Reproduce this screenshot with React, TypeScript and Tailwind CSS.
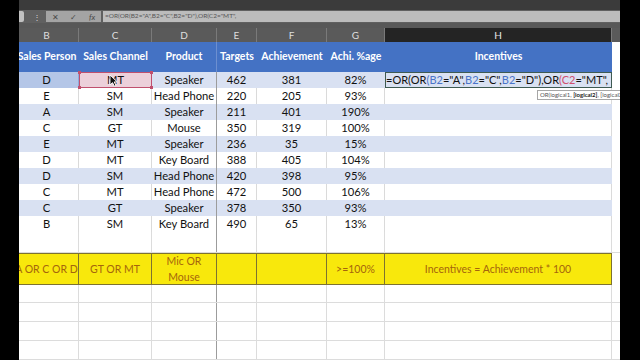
import React from "react";

type Row = { p: string; ch: string; prod: string; t: string; a: string; pct: string };

const rows: Row[] = [
  { p: "D", ch: "MT", prod: "Speaker", t: "462", a: "381", pct: "82%" },
  { p: "E", ch: "SM", prod: "Head Phone", t: "220", a: "205", pct: "93%" },
  { p: "A", ch: "SM", prod: "Speaker", t: "211", a: "401", pct: "190%" },
  { p: "C", ch: "GT", prod: "Mouse", t: "350", a: "319", pct: "100%" },
  { p: "E", ch: "MT", prod: "Speaker", t: "236", a: "35", pct: "15%" },
  { p: "D", ch: "MT", prod: "Key Board", t: "388", a: "405", pct: "104%" },
  { p: "D", ch: "SM", prod: "Head Phone", t: "420", a: "398", pct: "95%" },
  { p: "C", ch: "MT", prod: "Head Phone", t: "472", a: "500", pct: "106%" },
  { p: "C", ch: "GT", prod: "Speaker", t: "378", a: "350", pct: "93%" },
  { p: "B", ch: "SM", prod: "Key Board", t: "490", a: "65", pct: "13%" },
];

const W = ["w-[64px]", "w-[73px]", "w-[65px]", "w-[40px]", "w-[70px]", "w-[58px]", "w-[227px]"];
const letters = ["B", "C", "D", "E", "F", "G", "H"];

function Cursor() {
  return (
    <svg className="absolute left-[29px] top-[1px]" width="9" height="13" viewBox="0 0 9 13">
      <path d="M1 1 L1 11 L3.5 8.6 L5.4 12.2 L7 11.4 L5.2 7.9 L8.2 7.9 Z" fill="#111" stroke="#fff" strokeWidth="0.9" />
    </svg>
  );
}

function DataRow({ r, i }: { r: Row; i: number }) {
  const blue = i % 2 === 0;
  const first = i === 0;
  const bg = blue ? "bg-[#d9e1f2]" : "bg-white";
  const grid = blue ? "border-transparent" : "border-[#dadada]";
  const vals = [r.p, r.ch, r.prod, r.t, r.a, r.pct];
  return (
    <div className="flex h-[16px] whitespace-nowrap">
      {vals.map((v, c) => {
        let cls = `${W[c]} ${bg} border-r ${c === 2 ? "border-[#9c9c9c]" : grid}`;
        if (first && c === 0) cls = `${W[c]} bg-[#b4c6e7] border-r border-[#8ea9db]`;
        if (first && c === 1) cls = `${W[c]} bg-[#ecd0da] border border-[#c0506e] relative`;
        return (
          <div key={c} className={`${cls} flex shrink-0 items-center justify-center`}>
            {v}
            {first && c === 1 && (
              <>
                <Cursor />
                <span className="absolute -left-[2px] -top-[2px] h-[3px] w-[3px] bg-[#c0506e]" />
                <span className="absolute -right-[2px] -top-[2px] h-[3px] w-[3px] bg-[#c0506e]" />
                <span className="absolute -left-[2px] -bottom-[2px] h-[3px] w-[3px] bg-[#c0506e]" />
                <span className="absolute -right-[2px] -bottom-[2px] h-[3px] w-[3px] bg-[#c0506e]" />
              </>
            )}
          </div>
        );
      })}
      {first ? (
        <div className={`${W[6]} relative z-10 flex shrink-0 items-center overflow-visible border border-[#3e5a52] ${bg} text-[11px]`}>
          <span>
            =OR(OR<span className="text-[#4a74c9]">(B2</span>="A",<span className="text-[#4a74c9]">B2</span>="C",
            <span className="text-[#4a74c9]">B2</span>="D"),OR<span className="text-[#d0506e]">(C2</span>="MT",
          </span>
          <div className="absolute left-[151px] top-[17px] whitespace-nowrap border border-[#a6a6a6] bg-white px-[2px] text-[6px] leading-[8px] text-[#555]">
            OR(logical1, <b className="text-[#222]">[logical2]</b>, [logical3], ...)
          </div>
        </div>
      ) : (
        <div className={`${W[6]} shrink-0 ${bg} border-r ${blue ? "border-transparent" : "border-[#dadada]"}`} />
      )}
      <div className="flex-1 bg-white" />
    </div>
  );
}

function EmptyRow({ h }: { h: string }) {
  return (
    <div className={`flex ${h} shrink-0 border-b border-[#dcdcdc] bg-white`}>
      {W.map((w, c) => (
        <div key={c} className={`${w} shrink-0 border-r ${c === 2 ? "border-[#9c9c9c]" : "border-[#dcdcdc]"}`} />
      ))}
      <div className="flex-1" />
    </div>
  );
}

export default function App() {
  const yellow = ["A OR C OR D", "GT OR MT", "Mic OR\nMouse", "", "", ">=100%", "Incentives = Achievement * 100"];
  const headers = ["Sales Person", "Sales Channel", "Product", "Targets", "Achievement", "Achi. %age", "Incentives"];
  return (
    <div className="flex h-[360px] w-[640px] overflow-hidden bg-black" style={{ fontFamily: "Lato, 'Liberation Sans', sans-serif" }}>
      <div className="w-[19px] shrink-0" />
      <div className="flex w-[601px] shrink-0 flex-col overflow-hidden bg-white text-[11.2px] text-[#111]">
        <div className="h-[10px] shrink-0 bg-[#3b3b3b]" />
        <div className="flex h-[13px] shrink-0 items-center bg-[#606060]">
          <div className="h-[11px] w-[5px] rounded-r-[2px] bg-[#c2c2c2]" />
          <span className="ml-[9px] text-[8px] leading-none text-[#d8d8d8]">⋮</span>
          <div className="ml-[5px] flex h-[11px] w-[55px] items-center justify-around bg-[#a4a4a4] text-[8px] leading-none text-[#4a4a4a]">
            <span>✕</span>
            <span>✓</span>
            <span className="italic">fx</span>
          </div>
          <div className="ml-[2px] flex h-[11px] flex-1 items-center whitespace-nowrap bg-[#bcbcbc] px-[2px] text-[6.5px] leading-none text-[#555]">
            =OR(OR(B2="A",B2="C",B2="D"),OR(C2="MT",
          </div>
        </div>
        <div className="h-[5px] shrink-0 bg-[#585858]" />
        <div className="-ml-[4px] flex h-[14px] shrink-0 bg-[#5a5a5a] text-[10px] text-[#dedede]">
          {letters.map((l, c) => (
            <div
              key={l}
              className={`${W[c]} flex shrink-0 items-center justify-center border-r border-[#7a7a7a] ${c === 6 ? "bg-[#242424] text-[#e8e8e8]" : ""}`}
            >
              {l}
            </div>
          ))}
          <div className="flex-1" />
        </div>
        <div className="-ml-[4px] flex min-w-0 flex-col">
          <div className="flex h-[30px] shrink-0 whitespace-nowrap">
            {headers.map((h, c) => (
              <div
                key={h}
                className={`${W[c]} flex shrink-0 items-center justify-center bg-[#4472c4] text-[10.5px] font-bold text-white ${c === 2 ? "border-r border-[#6d8fd0]" : ""}`}
              >
                {h}
              </div>
            ))}
            <div className="flex-1 bg-white" />
          </div>
          {rows.map((r, i) => (
            <DataRow key={i} r={r} i={i} />
          ))}
          <EmptyRow h="h-[21px]" />
          <div className="flex h-[32px] shrink-0 bg-white">
            {yellow.map((y, c) => (
              <div
                key={c}
                className={`${W[c]} flex shrink-0 items-center justify-center whitespace-pre border-y border-r border-[#7d7230] bg-[#f8e80c] text-center text-[10.5px] leading-[16px] text-[#a5650c]`}
              >
                {y}
              </div>
            ))}
            <div className="flex-1" />
          </div>
          <EmptyRow h="h-[18px]" />
          <EmptyRow h="h-[19px]" />
          <EmptyRow h="h-[19px]" />
          <EmptyRow h="h-[19px]" />
        </div>
      </div>
      <div className="flex-1" />
    </div>
  );
}
